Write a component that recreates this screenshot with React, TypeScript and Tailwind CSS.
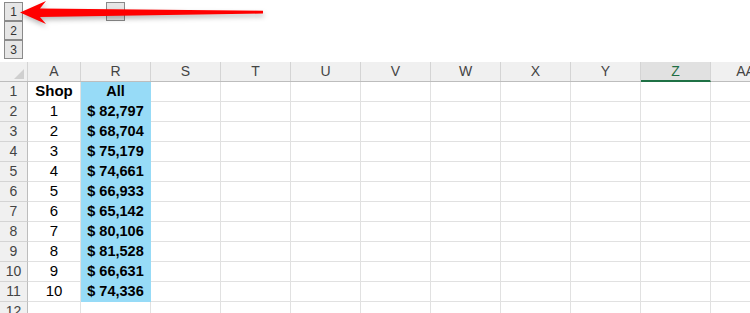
import React from 'react'

const shops = [
  { n: 1, v: '$ 82,797' },
  { n: 2, v: '$ 68,704' },
  { n: 3, v: '$ 75,179' },
  { n: 4, v: '$ 74,661' },
  { n: 5, v: '$ 66,933' },
  { n: 6, v: '$ 65,142' },
  { n: 7, v: '$ 80,106' },
  { n: 8, v: '$ 81,528' },
  { n: 9, v: '$ 66,631' },
  { n: 10, v: '$ 74,336' },
]

const emptyCols = ['S', 'T', 'U', 'V', 'W', 'X', 'Y', 'Z', 'AA']

function OutlineButton({ label }: { label: string }) {
  return (
    <div className="w-[19px] h-[19px] border border-[#8a8a8a] bg-[#e6e6e6] flex items-center justify-center text-[12px] text-[#333] leading-none">
      {label}
    </div>
  )
}

function Arrow() {
  return (
    <svg
      className="absolute left-0 top-0 pointer-events-none"
      width="275"
      height="34"
      viewBox="0 0 275 34"
      style={{ filter: 'drop-shadow(1px 3px 2.5px rgba(0,0,0,0.28))' }}
    >
      <polygon
        points="20,12.5 46,1 40,8.5 263,10.8 263,13.6 40,17 46,24"
        fill="#ff0000"
      />
    </svg>
  )
}

export default function App() {
  return (
    <div className="w-[750px] h-[313px] overflow-hidden bg-white relative font-['Liberation_Sans',Arial,sans-serif]">
      {/* Outline area */}
      <div className="h-[62px] relative">
        <div className="absolute left-[4px] top-[2px] flex flex-col">
          <OutlineButton label="1" />
          <OutlineButton label="2" />
          <OutlineButton label="3" />
        </div>
        <div className="absolute left-[106px] top-[2px] w-[19px] h-[19px] border border-[#8a8a8a] bg-[#e6e6e6]" />
        <Arrow />
      </div>

      {/* Column headers */}
      <div className="flex h-[20px] bg-[#f0f0f0] border-b border-[#bdbdbd] text-[14px] text-[#444]">
        <div className="w-[28px] shrink-0 border-r border-[#d4d4d4] relative">
          <div className="absolute right-[3px] bottom-[2px] w-0 h-0 border-l-[10px] border-l-transparent border-b-[10px] border-b-[#cfcfcf]" />
        </div>
        <div className="w-[53px] shrink-0 border-r border-[#d4d4d4] flex items-center justify-center">A</div>
        <div className="w-[70px] shrink-0 border-r border-[#d4d4d4] flex items-center justify-center">R</div>
        {emptyCols.map((c) =>
          c === 'Z' ? (
            <div
              key={c}
              className="w-[70px] shrink-0 border-r border-[#d4d4d4] bg-[#e1e1e1] border-b-2 border-b-[#1f7145] -mb-px flex items-center justify-center text-[#1f6e43]"
            >
              {c}
            </div>
          ) : (
            <div key={c} className="w-[70px] shrink-0 border-r border-[#d4d4d4] flex items-center justify-center">
              {c}
            </div>
          )
        )}
      </div>

      {/* Rows */}
      {[{ n: 'Shop', v: 'All' }, ...shops.map((s) => ({ n: String(s.n), v: s.v }))].map((row, i) => (
        <Row key={i} idx={i + 1} a={row.n} r={row.v} bold={i === 0} />
      ))}
      <Row idx={12} a="" r="" bold={false} empty />
    </div>
  )
}

function Row({ idx, a, r, bold, empty }: { idx: number; a: string; r: string; bold: boolean; empty?: boolean }) {
  return (
    <div className="flex h-[20px] text-[15px] text-black">
      <div className="w-[28px] shrink-0 bg-[#f0f0f0] border-r border-[#bdbdbd] border-b border-b-[#d4d4d4] flex items-center justify-center text-[14px] text-[#444]">
        {idx}
      </div>
      <div className={`w-[53px] shrink-0 border-r border-b border-[#e1e1e1] flex items-center justify-center ${bold ? 'font-bold' : ''}`}>
        {a}
      </div>
      <div
        className={`w-[70px] shrink-0 border-r border-b flex items-center justify-center font-bold text-[14.5px] ${
          empty ? 'border-[#e1e1e1]' : 'bg-[#97dbf7] border-[#97dbf7]'
        }`}
      >
        {r}
      </div>
      {emptyCols.map((c) => (
        <div key={c} className="w-[70px] shrink-0 border-r border-b border-[#e1e1e1]" />
      ))}
    </div>
  )
}
